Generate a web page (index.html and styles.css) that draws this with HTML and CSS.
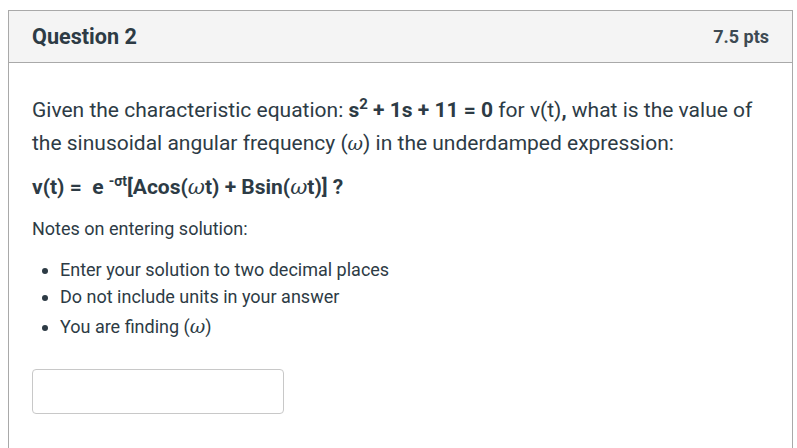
FILE: index.html
```html
<!DOCTYPE html>
<html>
<head>
<meta charset="utf-8">
<link rel="stylesheet" href="styles.css">
</head>
<body>
<div class="question">
  <div class="q-header">
    <span class="q-title">Question 2</span>
    <span class="q-pts">7.5 pts</span>
  </div>
  <div class="q-body">
    <p class="q-text">Given the characteristic equation: <b>s<sup class="sq">2</sup> + 1s + 11 = 0</b> for v(t)<b>,</b> what is the value of the sinusoidal angular frequency (<i class="om">ω</i>) in the underdamped expression:</p>
    <p class="q-eq"><b>v(t) = &nbsp;e <sup class="ex">-σt</sup>[Acos(<i class="om2">ω</i>t) + Bsin(<i class="om2">ω</i>t)] ?</b></p>
    <p class="notes">Notes on entering solution:</p>
    <ul class="list">
      <li>Enter your solution to two decimal places</li>
      <li>Do not include units in your answer</li>
      <li class="last">You are finding (<i class="om">ω</i>)</li>
    </ul>
    <div class="answer"></div>
  </div>
</div>
</body>
</html>
```

FILE: styles.css
```css
html, body {
  margin: 0;
  padding: 0;
  background: #ffffff;
}
body {
  padding: 10px 4px 0 8px;
  font-family: Roboto, "Liberation Sans", sans-serif;
  color: #2d3b45;
}
.question {
  border: 1px solid #a9a9a9;
  border-bottom: none;
  height: 460px;
  width: 785px;
  box-sizing: border-box;
}
.q-header {
  display: flex;
  justify-content: space-between;
  align-items: center;
  background: #f4f4f4;
  height: 52px;
  border-bottom: 1px solid #a9a9a9;
  padding: 0 23px 0 23px;
  box-sizing: border-box;
  font-weight: 700;
}
.q-title {
  font-size: 21.6px;
}
.q-pts {
  font-size: 18px;
  color: #3d4a53;
}
.q-body {
  padding: 31px 23px 0 23px;
}
.q-text {
  margin: 0;
  font-size: 21px;
  line-height: 33px;
}
.q-text b {
  font-weight: 700;
}
.sq {
  font-size: 15px;
  line-height: 0;
  vertical-align: 8px;
}
.om, .om2 {
  font-family: "DejaVu Serif", serif;
  font-style: italic;
  font-weight: 400;
  font-size: 19px;
}
.om2 {
  font-size: 21px;
}
.q-eq {
  margin: 12px 0 0 0;
  font-size: 21px;
  line-height: 30px;
}
.ex {
  font-size: 14px;
  line-height: 0;
  vertical-align: 8px;
}
.notes {
  margin: 14px 0 0 0;
  font-size: 18px;
  line-height: 26px;
}
.list {
  margin: 14px 0 0 0;
  padding-left: 28px;
  font-size: 18px;
  line-height: 27px;
}
.list li.last {
  margin-top: 3px;
}
.answer {
  margin-top: 29px;
  width: 252px;
  height: 45px;
  border: 1px solid #c8c8c8;
  border-radius: 4px;
  box-sizing: border-box;
}
```
